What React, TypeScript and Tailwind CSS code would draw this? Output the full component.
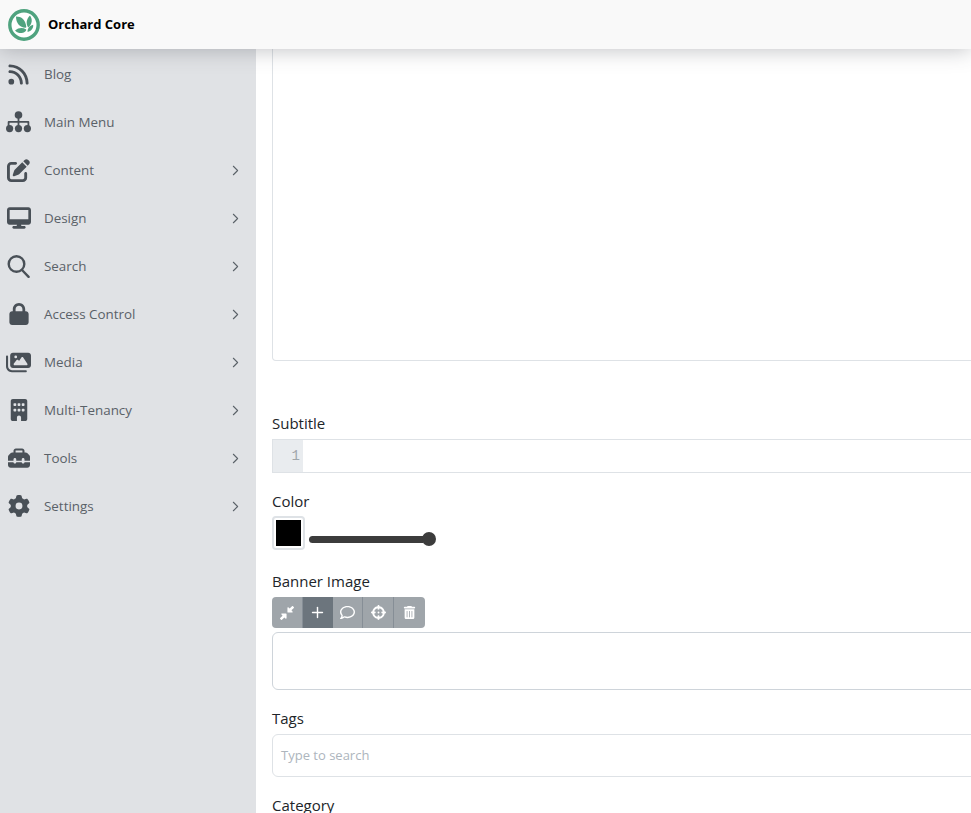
import { FaRss, FaPenToSquare, FaDesktop, FaLock, FaImages, FaBuilding, FaToolbox, FaGear, FaDownLeftAndUpRightToCenter, FaRegComment, FaCrosshairs, FaTrashCan } from "react-icons/fa6";
import { LuChevronRight, LuPlus } from "react-icons/lu";

function SitemapIcon() {
  return (
    <svg width="25" height="22" viewBox="0 0 25 22" fill="#495057">
      <circle cx="12.5" cy="4" r="3.8" />
      <circle cx="3.6" cy="17.6" r="3.6" />
      <circle cx="12.5" cy="17.6" r="3.6" />
      <circle cx="21.4" cy="17.6" r="3.6" />
      <path d="M11.6 6h1.8v4h8.900a1 1 0 0 1 1 1v4h-1.800v-3.200h-8.100V15h-1.800v-3.200H3.500V15H1.700v-4a1 1 0 0 1 1-1h8.900z" />
    </svg>
  );
}

function SearchIcon() {
  return (
    <svg width="23" height="24" viewBox="0 0 23 24" fill="none" stroke="#495057" strokeWidth="2.4">
      <circle cx="9.500" cy="10" r="7.800" />
      <path d="M15 16l6.600 6.800" strokeLinecap="round" />
    </svg>
  );
}

const menu = [
  { label: "Blog", icon: <FaRss className="text-[23px]" />, arrow: false },
  { label: "Main Menu", icon: <SitemapIcon />, arrow: false },
  { label: "Content", icon: <FaPenToSquare className="text-[23px]" />, arrow: true },
  { label: "Design", icon: <FaDesktop className="text-[24px]" />, arrow: true },
  { label: "Search", icon: <SearchIcon />, arrow: true },
  { label: "Access Control", icon: <FaLock className="text-[22px]" />, arrow: true },
  { label: "Media", icon: <FaImages className="text-[25px]" />, arrow: true },
  { label: "Multi-Tenancy", icon: <FaBuilding className="text-[22px]" />, arrow: true },
  { label: "Tools", icon: <FaToolbox className="text-[22px]" />, arrow: true },
  { label: "Settings", icon: <FaGear className="text-[22px]" />, arrow: true },
];

function Logo() {
  return (
    <svg width="32" height="32" viewBox="0 0 32 32">
      <circle cx="16" cy="16" r="14.200" fill="white" stroke="#4fa37f" strokeWidth="3.400" />
      <path d="M8 7.500c5.500 0 9.500 3 10.300 10.500-.1.500-.3.800-.8.800C11.500 18.500 8 14 8 7.500z" fill="#4fa37f" />
      <path d="M20.200 18.500c-2.600-4-1.800-8.800 1.800-12 2.800 3.800 2.200 8.800-1.800 12z" fill="#4fa37f" />
      <path d="M7 21.500c3.600-3 7.800-3.200 11.300-1-.2 3.400-7 5.600-11.300 1z" fill="#4fa37f" />
      <path d="M19.600 23c-.4-3.400 1.900-6.400 5.600-7.200.4 3.400-1.900 6.500-5.600 7.200z" fill="#4fa37f" />
    </svg>
  );
}

function ToolButton({ children, active }: { children: React.ReactNode; active?: boolean }) {
  return (
    <div className={active ? "flex h-full w-[30px] items-center justify-center bg-[#6c757d]" : "flex h-full w-[31px] items-center justify-center border-r border-[#868e96] bg-[#9fa5aa] last:border-r-0"}>
      {children}
    </div>
  );
}

export default function App() {
  return (
    <div className="h-[813px] overflow-hidden bg-white font-['Open_Sans','Noto_Sans',sans-serif] text-[#212529]">
      <header className="relative z-10 flex h-[49px] items-center bg-[#f9f9f9] pl-2 shadow-[0_0_22px_rgba(60,64,72,0.35)]">
        <Logo />
        <span className="ml-2 text-[13px] font-bold text-black">Orchard Core</span>
      </header>
      <div className="flex">
        <aside className="h-[764px] w-[256px] shrink-0 bg-[#e0e2e5] pt-px">
          {menu.map((item) => (
            <div key={item.label} className="flex h-12 items-center">
              <div className="flex w-[44px] shrink-0 justify-center pr-[7px] text-[#495057]">
                {item.icon}
              </div>
              <span className="text-[13.4px] text-[#5a6168]">{item.label}</span>
              {item.arrow && <LuChevronRight className="ml-auto mr-3 text-[17px] text-[#5a6168]" strokeWidth={1.5} />}
            </div>
          ))}
        </aside>
        <main className="w-[760px] shrink-0 pl-4">
          <div className="h-[312px] rounded-b-[4px] border-x border-b border-[#dee2e6]" />
          <label className="mt-[50px] block text-[15px] leading-6">Subtitle</label>
          <div className="mt-1 flex h-[34px] border border-[#dee2e6]">
            <div className="w-[30px] bg-[#e9ecef] pr-[3px] pt-[6px] text-right font-['Liberation_Mono',monospace] text-[14px] leading-5 text-[#a0a6ab]">1</div>
          </div>
          <label className="mt-4 block text-[15px] leading-6">Color</label>
          <div className="mt-[3px] flex items-center">
            <div className="h-[34px] w-[33px] rounded-[4px] border-2 border-[#dee2e6] bg-white p-[2px]">
              <div className="h-full w-full bg-black" />
            </div>
            <div className="ml-1 mt-[12px] flex h-[16px] w-[127px] items-center">
              <div className="h-[7px] flex-1 rounded-l-full bg-[#3c3c3c]" />
              <div className="-ml-px h-[14px] w-[14px] rounded-full bg-[#3c3c3c]" />
            </div>
          </div>
          <label className="mt-[19px] block text-[15px] leading-6">Banner Image</label>
          <div className="mt-1 flex h-[31px] w-[153px] overflow-hidden rounded-[4px] text-[13px] text-white">
            <ToolButton><FaDownLeftAndUpRightToCenter className="text-[14px]" /></ToolButton>
            <ToolButton active><LuPlus className="text-[17px]" strokeWidth={2} /></ToolButton>
            <ToolButton><FaRegComment className="text-[15px]" /></ToolButton>
            <ToolButton><FaCrosshairs className="text-[15px]" /></ToolButton>
            <ToolButton><FaTrashCan className="text-[13px]" /></ToolButton>
          </div>
          <div className="mt-1 h-[58px] rounded-[6px] border border-[#ced4da]" />
          <label className="mt-4 block text-[15px] leading-6">Tags</label>
          <div className="mt-[4px] flex h-[43px] items-center rounded-[6px] border border-[#dee2e6] pl-2 pt-px text-[13px] text-[#adb5bd]">Type to search</div>
          <label className="mt-4 block text-[15px] leading-6">Category</label>
        </main>
      </div>
    </div>
  );
}
